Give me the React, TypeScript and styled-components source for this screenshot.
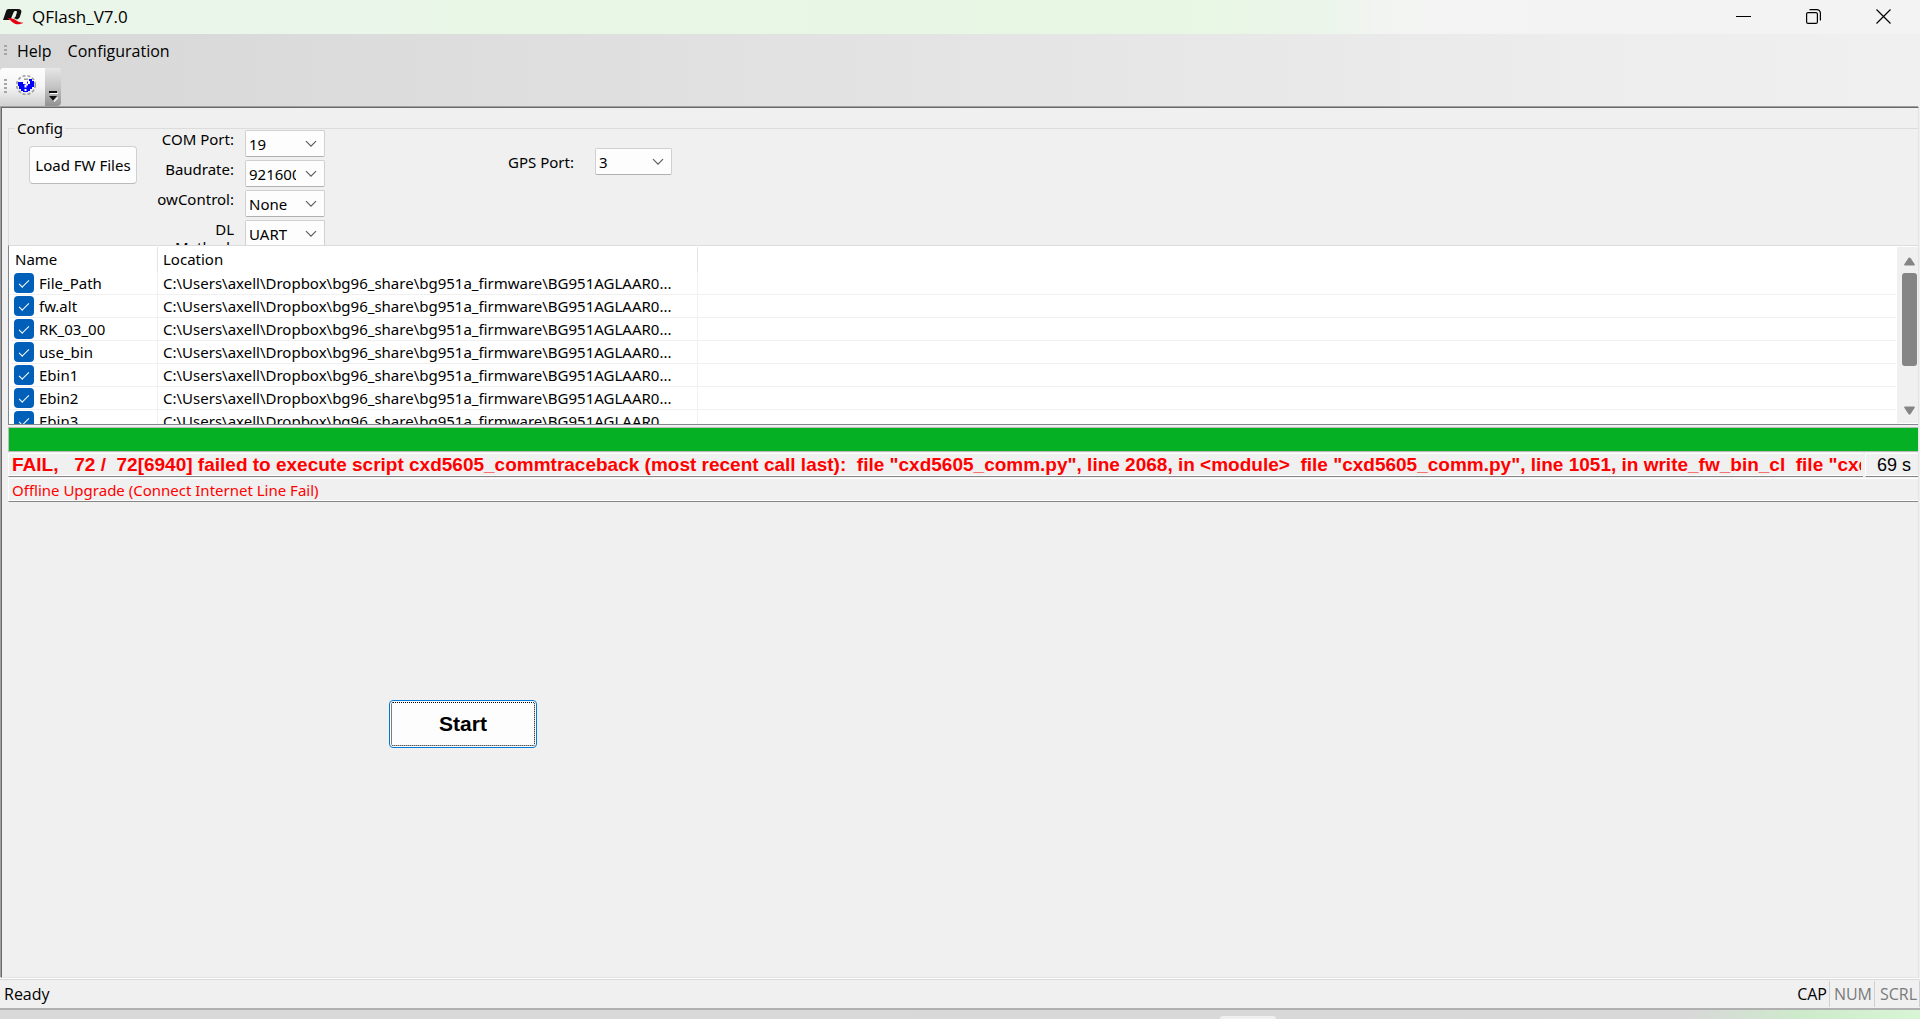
import React from "react";
import styled, { createGlobalStyle } from "styled-components";

const shell = '"Open Sans", "Noto Sans", sans-serif';
const dialog = '"Noto Sans", "Open Sans", sans-serif';
const arial = '"Liberation Sans", Arial, sans-serif';

const GlobalStyle = createGlobalStyle`
  *, *::before, *::after { box-sizing: border-box; }
  body { margin: 0; background: #f0f0f0; color: #000; overflow: hidden; }
  button, input, select { font: inherit; color: inherit; }
`;

const Window = styled.div`
  display: flex;
  flex-direction: column;
  height: 100vh;
  font: 16px/20px ${shell};
`;

const TitleBar = styled.header`
  display: flex;
  align-items: center;
  height: 34px;
  flex: none;
  padding: 0 2px;
  background: linear-gradient(90deg, #ebf6ea 0%, #ebf6ea 18%, #e8f7e6 25%, #e8f7e4 62%, #ebf5ea 69%, #f2f4f2 72%, #f3f3f3 80%);
`;

const Title = styled.h1`
  flex: 1;
  margin: 0;
  padding-left: 8px;
  font: 17px/20px ${shell};
`;

const CaptionButton = styled.button`
  display: grid;
  place-items: center;
  width: 70px;
  height: 34px;
  padding: 0 0 2px;
  border: 0;
  background: transparent;
`;

const Bars = styled.div`
  flex: none;
  background: linear-gradient(90deg, #d8d8d8 0%, #dadada 12%, #ededed 84%, #f0f0f0 100%);
`;

const MenuBar = styled.nav`
  display: flex;
  align-items: center;
  height: 34px;
  padding-left: 4px;
`;

const MenuButton = styled.button`
  margin-right: 16px;
  padding: 0;
  border: 0;
  background: transparent;
`;

const Grip = styled.span<{ $tall?: boolean }>`
  width: 3px;
  height: ${(p) => (p.$tall ? 16 : 12)}px;
  margin-right: ${(p) => (p.$tall ? 8 : 10)}px;
  background: repeating-linear-gradient(180deg, #a6a6a6 0 2px, transparent 2px 4px);
`;

const ToolBar = styled.div`
  display: flex;
  width: 61px;
  height: 38px;
  border-radius: 4px;
  overflow: hidden;
  background: linear-gradient(180deg, #fdfdfd, #f4f4f4 50%, #cfcfcf);
`;

const ToolMain = styled.div`
  display: flex;
  align-items: center;
  flex: 1;
  padding-left: 4px;
`;

const ToolButton = styled.button`
  display: grid;
  padding: 0 0 4px;
  border: 0;
  background: transparent;
`;

const Overflow = styled.button`
  display: flex;
  align-items: flex-end;
  justify-content: center;
  width: 16px;
  padding: 0 1px 4px 0;
  border: 0;
  background: linear-gradient(180deg, #e6e6e6, #c4c4c4 50%, #929292);
`;

const Client = styled.main`
  flex: 1;
  min-height: 0;
  display: flex;
  flex-direction: column;
  margin: 1px 1px 0;
  padding: 10px 0 0 6px;
  border: 1px solid #696969;
  border-right-color: #e3e3e3;
  border-bottom-color: #e3e3e3;
  box-shadow: -1px -1px 0 #a0a0a0;
  background: #f0f0f0;
  font: 15px/20px ${dialog};
`;

const Config = styled.fieldset`
  display: flex;
  flex: none;
  align-items: flex-start;
  height: 127px;
  min-width: 0;
  margin: 0;
  padding: 0 0 0 20px;
  border: 1px solid #dcdcdc;
  border-width: 1px 0 0 1px;
`;

const Legend = styled.legend`
  margin-left: -14px;
  padding: 0 2px;
  height: 20px;
`;

const LoadButton = styled.button`
  width: 108px;
  height: 38px;
  margin-top: 8px;
  padding: 0;
  border: 1px solid #d0d0d0;
  border-bottom-color: #bababa;
  border-radius: 4px;
  background: #fdfdfd;
  white-space: nowrap;
`;

const Ports = styled.div`
  display: grid;
  grid-template-columns: 80px 80px;
  grid-auto-rows: 27px;
  gap: 3px 11px;
  height: 115px;
  margin: -8px 0 0 17px;
  overflow: hidden;
  line-height: 18px;
`;

const PortLabel = styled.label`
  text-align: right;
`;

const GpsPort = styled.div`
  display: grid;
  grid-template-columns: 69px 77px;
  gap: 18px;
  align-items: center;
  margin: 10px 0 0 183px;
  white-space: nowrap;
`;

const SelectBox = styled.span`
  position: relative;
  display: block;
  height: 27px;
  svg {
    position: absolute;
    right: 8px;
    top: 10px;
    pointer-events: none;
  }
`;

const Select = styled.select`
  appearance: none;
  display: block;
  width: 100%;
  height: 27px;
  padding: 0 28px 0 3px;
  border: 1px solid #d0d0d0;
  border-bottom-color: #b0b0b0;
  border-radius: 2px;
  background: #fdfdfd;
`;

const ListView = styled.div`
  display: flex;
  flex: none;
  height: 180px;
  border: 1px solid #828790;
  border-top-color: #dcdcdc;
  border-right: 0;
  background: #fff;
`;

const ListScroll = styled.div`
  flex: 1;
  min-width: 0;
  padding: 1px;
  overflow: hidden;
`;

const Table = styled.table`
  width: 100%;
  table-layout: fixed;
  border-collapse: separate;
  border-spacing: 0;
  white-space: nowrap;
`;

const HeadCell = styled.th<{ $w?: number }>`
  width: ${(p) => (p.$w ? `${p.$w}px` : "auto")};
  height: 25px;
  padding: 0 5px 1px;
  border-right: ${(p) => (p.$w ? "1px solid #e5e5e5" : "0")};
  font-weight: 400;
  text-align: left;
`;

const Cell = styled.td`
  height: 23px;
  padding: 0 0 0 5px;
  border-right: 1px solid #f0f0f0;
  border-bottom: 1px solid #f0f0f0;
  line-height: 22px;
  &:last-child { border-right: 0; }
`;

const CheckLabel = styled.label`
  display: flex;
  align-items: center;
  gap: 5px;
  height: 22px;
  margin-left: -1px;
`;

const Check = styled.input`
  appearance: none;
  display: grid;
  place-items: center;
  flex: none;
  width: 20px;
  height: 20px;
  margin: 0;
  border-radius: 4px;
  background: #005fb8;
  &:checked::after {
    content: "";
    width: 10px;
    height: 5px;
    border: solid #fff;
    border-width: 0 0 1px 1px;
    transform: translateY(-1px) rotate(-45deg);
  }
`;

const ScrollBar = styled.div`
  display: flex;
  flex-direction: column;
  align-items: center;
  width: 21px;
  margin: 1px 0;
  padding: 10px 0 8px 3px;
  background: #f0f0f0;
`;

const Thumb = styled.div`
  width: 15px;
  height: 93px;
  margin: 7px 0 auto;
  border-radius: 3px;
  background: #858585;
`;

const Progress = styled.div`
  flex: none;
  height: 25px;
  margin-top: 2px;
  border: 1px solid #bcbcbc;
  border-right: 0;
  background: #06b025;
`;

const StatusRow = styled.div`
  display: flex;
  flex: none;
  gap: 2px;
  margin-top: 1px;
`;

const Sunken = styled.div<{ $fixed?: boolean }>`
  flex: ${(p) => (p.$fixed ? "0 0 53px" : "1")};
  min-width: 0;
  height: 24px;
  padding: 0 2px 0 3px;
  border-left: 1px solid #fff;
  border-top: 1px solid #fff;
  border-bottom: 1px solid #868686;
  box-shadow: inset 0 -1px 0 #fff;
  color: #f00;
  line-height: 22px;
`;

const FailText = styled.output`
  display: block;
  overflow: hidden;
  white-space: pre;
  font: bold 19px/22px ${arial};
`;

const Elapsed = styled.span`
  display: block;
  padding-left: 3px;
  color: #000;
  text-align: center;
  font: 18px/22px ${arial};
`;

const Actions = styled.section`
  padding: 198px 0 0 381px;
`;

const StartButton = styled.button`
  width: 148px;
  height: 48px;
  padding: 1px;
  border: 1px solid #0078d4;
  border-radius: 4px;
  background: #fdfdfd;
  font: bold 21px/24px ${arial};
  outline: 1px dotted #000;
  outline-offset: -3px;
`;

const StatusBar = styled.footer`
  display: flex;
  flex: none;
  align-items: center;
  height: 31px;
  margin-top: 1px;
  padding-left: 4px;
  border-top: 1px solid #d8d8d8;
  border-bottom: 2px solid #b0b0b0;
  box-shadow: 0 -1px 0 #fff;
  line-height: 26px;
`;

const Ready = styled.span`
  flex: 1;
`;

const Key = styled.span<{ $on?: boolean }>`
  width: 45px;
  padding-right: 2px;
  border-right: 1px solid #d0d0d0;
  color: ${(p) => (p.$on ? "#000" : "#7a7a7a")};
  text-align: right;
`;

const Desktop = styled.div`
  display: flex;
  flex: none;
  align-items: flex-end;
  height: 9px;
  padding-left: 1220px;
  background: linear-gradient(90deg, #d9d9d9 0%, #d8d8d8 88%, #cdebcb 94%, #d8f5d6 100%);
`;

const TaskButton = styled.div`
  width: 56px;
  height: 3px;
  border-radius: 4px 4px 0 0;
  background: #f0f0f0;
`;

const Chevron = () => (
  <svg width="12" height="8" viewBox="0 0 12 8" fill="none" stroke="#5c5c5c" strokeWidth="1.2" aria-hidden="true">
    <path d="M1 1.2 6 6.2 11 1.2" />
  </svg>
);

const Arrow = ({ down }: { down?: boolean }) => (
  <svg width="11" height="9" viewBox="0 0 11 9" fill="#858585" aria-hidden="true">
    <path d={down ? "M1 .5h9a.8.8 0 0 1 .7 1.3L6.6 8a1.3 1.3 0 0 1-2.2 0L.3 1.8A.8.8 0 0 1 1 .5z" : "M1 8.5h9a.8.8 0 0 0 .7-1.3L6.6 1a1.3 1.3 0 0 0-2.2 0L.3 7.2A.8.8 0 0 0 1 8.5z"} />
  </svg>
);

const Dropdown = ({ id, value }: { id: string; value: string }) => (
  <SelectBox>
    <Select id={id} defaultValue={value}>
      <option>{value}</option>
    </Select>
    <Chevron />
  </SelectBox>
);

const ports = [
  { id: "com", label: "COM Port:", value: "19" },
  { id: "baud", label: "Baudrate:", value: "921600" },
  { id: "flow", label: "owControl:", value: "None" },
  { id: "method", label: "DL Method:", value: "UART" },
];

const files = ["File_Path", "fw.alt", "RK_03_00", "use_bin", "Ebin1", "Ebin2", "Ebin3"];
const location = "C:\\Users\\axell\\Dropbox\\bg96_share\\bg951a_firmware\\BG951AGLAAR0...";
const failure =
  'FAIL,   72 /  72[6940] failed to execute script cxd5605_commtraceback (most recent call last):  file "cxd5605_comm.py", line 2068, in <module>  file "cxd5605_comm.py", line 1051, in write_fw_bin_cl  file "cxd5605_comm.py"';

export default function App() {
  return (
    <Window>
      <GlobalStyle />
      <TitleBar>
        <svg width="22" height="16" viewBox="0 0 22 16" aria-hidden="true">
          <path d="M6.500 0H16c2.800 0 4 1.400 3.200 3.800l-1.300 4c-.5 1.500-1.500 2.300-3 2.700l-3.700-1.800c1.400.2 2-.3 2.400-1.300l1.200-3.600c.4-1.200 0-1.800-1.200-1.800s-1.800.6-2.200 1.700L8.800 10 6.500 11H1L4 2.200C4.500.8 5.200 0 6.500 0z" fill="#111" />
          <path d="M5 9.200c3.500-.8 6.500.2 9 2 2 1.500 4 2.200 7.500 2.600-4.600 2.400-8.600 1.600-11-.6C9 11.700 7.400 10.200 5 9.200z" fill="#e60012" />
        </svg>
        <Title>QFlash_V7.0</Title>
        <CaptionButton aria-label="Minimize">
          <svg width="15" height="15" viewBox="0 0 15 15"><path d="M0 7.5h15" stroke="#000" /></svg>
        </CaptionButton>
        <CaptionButton aria-label="Restore">
          <svg width="15" height="15" viewBox="0 0 15 15" fill="none" stroke="#000" strokeWidth="1.2">
            <rect x=".6" y="3.600" width="10.800" height="10.800" rx="1.500" />
            <path d="M3.500.6h7.400a3.500 3.500 0 0 1 3.500 3.500v7.400" />
          </svg>
        </CaptionButton>
        <CaptionButton aria-label="Close">
          <svg width="15" height="15" viewBox="0 0 15 15"><path d="M.5.5l14 14M14.500.5l-14 14" stroke="#000" strokeWidth="1.200" /></svg>
        </CaptionButton>
      </TitleBar>
      <Bars>
        <MenuBar>
          <Grip />
          <MenuButton>Help</MenuButton>
          <MenuButton>Configuration</MenuButton>
        </MenuBar>
        <ToolBar>
          <ToolMain>
            <Grip $tall />
            <ToolButton aria-label="About">
              <svg width="22" height="22" viewBox="0 0 22 22">
                <circle cx="11" cy="11" r="9.300" fill="none" stroke="#9a9a9a" strokeWidth="1.600" strokeDasharray="3 2" />
                <path d="M3 8h5v2h4V7h2V5h3v2h2v6h-2v2h-2v2h-2v1H8v-1H6v-2H4v-3H3z" fill="#00f" />
                <path d="M9 6.500h4M14 7v3M13 10.500h-2M10.500 10.500v3M10.500 15v2" fill="none" stroke="#fff" strokeWidth="2" />
                <path d="M9 4.500h4v1.500H9z" fill="#9a9a9a" />
              </svg>
            </ToolButton>
          </ToolMain>
          <Overflow aria-label="Toolbar options">
            <svg width="10" height="11" viewBox="0 0 10 11">
              <path d="M2 2.500h8M6 10.500 10 6.500" stroke="#fff" strokeWidth="1.200" />
              <path d="M1 0h8v2H1zM1 5h8L5 9.500z" fill="#111" />
            </svg>
          </Overflow>
        </ToolBar>
      </Bars>
      <Client>
        <Config>
          <Legend>Config</Legend>
          <LoadButton>Load FW Files</LoadButton>
          <Ports>
            {ports.map((p) => (
              <React.Fragment key={p.id}>
                <PortLabel htmlFor={p.id}>{p.label}</PortLabel>
                <Dropdown id={p.id} value={p.value} />
              </React.Fragment>
            ))}
          </Ports>
          <GpsPort>
            <label htmlFor="gps">GPS Port:</label>
            <Dropdown id="gps" value="3" />
          </GpsPort>
        </Config>
        <ListView>
          <ListScroll>
            <Table>
              <thead>
                <tr>
                  <HeadCell $w={148}>Name</HeadCell>
                  <HeadCell $w={540}>Location</HeadCell>
                  <HeadCell />
                </tr>
              </thead>
              <tbody>
                {files.map((name) => (
                  <tr key={name}>
                    <Cell>
                      <CheckLabel>
                        <Check type="checkbox" defaultChecked />
                        {name}
                      </CheckLabel>
                    </Cell>
                    <Cell>{location}</Cell>
                    <Cell />
                  </tr>
                ))}
              </tbody>
            </Table>
          </ListScroll>
          <ScrollBar>
            <Arrow />
            <Thumb />
            <Arrow down />
          </ScrollBar>
        </ListView>
        <Progress role="progressbar" aria-label="Download progress" aria-valuenow={100} />
        <StatusRow>
          <Sunken><FailText>{failure}</FailText></Sunken>
          <Sunken $fixed><Elapsed>69 s</Elapsed></Sunken>
        </StatusRow>
        <StatusRow>
          <Sunken>Offline Upgrade (Connect Internet Line Fail)</Sunken>
        </StatusRow>
        <Actions>
          <StartButton>Start</StartButton>
        </Actions>
      </Client>
      <StatusBar>
        <Ready>Ready</Ready>
        <Key $on>CAP</Key>
        <Key>NUM</Key>
        <Key>SCRL</Key>
      </StatusBar>
      <Desktop>
        <TaskButton />
      </Desktop>
    </Window>
  );
}
